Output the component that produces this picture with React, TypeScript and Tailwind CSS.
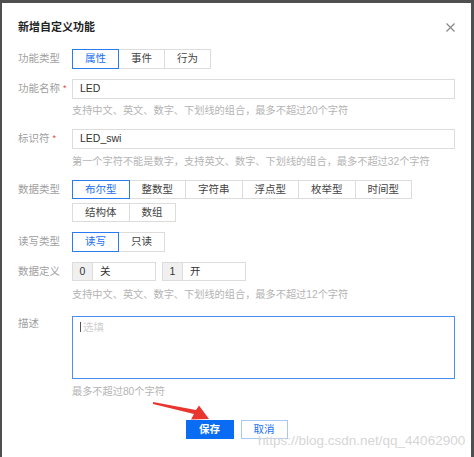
import React from "react";

const Seg = ({ items, active, h }: { items: string[]; active: number; h: string }) => (
  <div className={`flex ${h}`}>
    {items.map((t, i) => (
      <div
        key={t}
        className={`flex items-center justify-center px-[12px] border ${i > 0 ? "-ml-px" : ""} ${
          i === active ? "border-[#2b7bf0] text-[#1a6ff0] relative z-10" : "border-[#dcdcdc] text-[#444]"
        }`}
      >
        {t}
      </div>
    ))}
  </div>
);

const Label = ({ text, req }: { text: string; req?: boolean }) => (
  <div className="w-[54px] shrink-0 text-[#a0a0a0] flex items-center">
    <span>{text}</span>
    {req && <span className="text-[#e54545] ml-[3px] text-[9px]">*</span>}
  </div>
);

const Help = ({ text, mt }: { text: string; mt: string }) => (
  <div className={`pl-[54px] ${mt} leading-[14px] text-[10.2px] text-[#b4b4b4]`}>{text}</div>
);

export default function App() {
  return (
    <div className="w-[474px] h-[457px] bg-[#4f4f4f] flex font-['Liberation_Sans','Noto_Sans_CJK_SC',sans-serif] text-[10.5px] overflow-hidden">
      <div className="ml-[2px] mt-[3px] mr-[3px] flex-1 bg-white relative flex flex-col pl-[16px] pr-[16px]">
        {/* title */}
        <div className="mt-[17px] h-[14px] flex items-center justify-between">
          <span className="text-[11px] font-bold text-[#222] leading-[14px]">新增自定义功能</span>
          <svg width="9" height="9" viewBox="0 0 9 9">
            <path d="M0.5 0.5 L8.5 8.5 M8.5 0.5 L0.5 8.5" stroke="#888" strokeWidth="1.2" />
          </svg>
        </div>

        {/* 功能类型 */}
        <div className="mt-[15px] flex h-[20px]">
          <Label text="功能类型" />
          <Seg items={["属性", "事件", "行为"]} active={0} h="h-[20px]" />
        </div>

        {/* 功能名称 */}
        <div className="mt-[10px] flex h-[20px]">
          <Label text="功能名称" req />
          <div className="flex-1 border border-[#dcdcdc] flex items-center pl-[7px] text-[#333]">LED</div>
        </div>
        <Help mt="mt-[5px]" text="支持中文、英文、数字、下划线的组合，最多不超过20个字符" />

        {/* 标识符 */}
        <div className="mt-[11px] flex h-[20px]">
          <Label text="标识符" req />
          <div className="flex-1 border border-[#dcdcdc] flex items-center pl-[7px] text-[#333]">LED_swi</div>
        </div>
        <Help mt="mt-[6px]" text="第一个字符不能是数字，支持英文、数字、下划线的组合，最多不超过32个字符" />

        {/* 数据类型 */}
        <div className="mt-[11px] flex">
          <div className="w-[54px] shrink-0 text-[#a0a0a0] h-[19px] flex items-center">数据类型</div>
          <div className="flex flex-col gap-[4px]">
            <Seg items={["布尔型", "整数型", "字符串", "浮点型", "枚举型", "时间型"]} active={0} h="h-[19px]" />
            <Seg items={["结构体", "数组"]} active={-1} h="h-[19px]" />
          </div>
        </div>

        {/* 读写类型 */}
        <div className="mt-[10px] flex h-[20px]">
          <Label text="读写类型" />
          <Seg items={["读写", "只读"]} active={0} h="h-[20px]" />
        </div>

        {/* 数据定义 */}
        <div className="mt-[10px] flex h-[19px]">
          <Label text="数据定义" />
          <div className="flex gap-[6px]">
            {[
              ["0", "关"],
              ["1", "开"],
            ].map(([k, v]) => (
              <div key={k} className="w-[84px] h-[19px] border border-[#dcdcdc] flex">
                <div className="w-[20px] bg-[#f0f0f0] border-r border-[#dcdcdc] flex items-center justify-center text-[#333]">
                  {k}
                </div>
                <div className="flex items-center pl-[7px] text-[#333]">{v}</div>
              </div>
            ))}
          </div>
        </div>
        <Help mt="mt-[7px]" text="支持中文、英文、数字、下划线的组合，最多不超过12个字符" />

        {/* 描述 */}
        <div className="mt-[14px] flex">
          <div className="w-[54px] shrink-0 text-[#a0a0a0] leading-[14px]">描述</div>
          <div className="flex-1 h-[63px] border border-[#4a8ef5] pl-[7px] pt-[3px] flex items-start">
            <div className="w-px h-[10px] bg-[#555] mt-[2px]" />
            <span className="text-[#cfcfcf] leading-[14px] ml-[2px]">选填</span>
          </div>
        </div>
        <Help mt="mt-[6px]" text="最多不超过80个字符" />

        {/* buttons */}
        <div className="mt-[21px] flex justify-center gap-[7px]">
          <div className="w-[48px] h-[19px] bg-[#0a6cf2] text-white font-bold flex items-center justify-center">保存</div>
          <div className="w-[47px] h-[19px] border border-[#a9c8f5] text-[#1a6ff0] flex items-center justify-center">取消</div>
        </div>

        {/* watermark */}
        <div className="absolute left-[256px] top-[430px] text-[13.5px] leading-[16px] text-[#d6d6d6] font-['Liberation_Sans',sans-serif] whitespace-nowrap">
          https://blog.csdn.net/qq_44062900
        </div>

        {/* red arrow */}
        <svg className="absolute left-0 top-0 pointer-events-none" width="474" height="457">
          <polygon
            points="153,402 196,410 199,405.5 209,419 191,419.5 194,414 153,404"
            fill="#e8362f"
            transform="translate(-2,-3)"
          />
        </svg>
      </div>
    </div>
  );
}
